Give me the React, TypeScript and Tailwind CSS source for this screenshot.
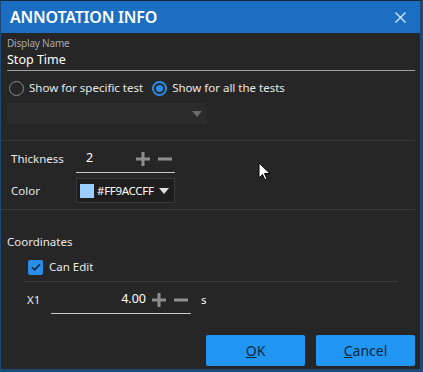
import React, { useState } from "react"

const font = { fontFamily: '"Noto Sans", "Open Sans", sans-serif' }

const Plus = () => (
    <svg width="14" height="14" viewBox="0 0 14 14">
        <path d="M7 0v14M0 7h14" stroke="#8e8e8e" strokeWidth="3" />
    </svg>
)

const Minus = () => (
    <svg width="14" height="14" viewBox="0 0 14 14">
        <path d="M0 7h14" stroke="#8e8e8e" strokeWidth="3" />
    </svg>
)

const Caret = ({ color = "#e0e0e0" }: { color?: string }) => (
    <svg width="10" height="6" viewBox="0 0 10 6">
        <path d="M0 0h10L5 6z" fill={color} />
    </svg>
)

const Divider = ({ className = "" }: { className?: string }) => (
    <div className={"h-px bg-[#3a3a3a] " + className} />
)

const App = () => {
    const [allTests, setAllTests] = useState(true)
    const [canEdit, setCanEdit] = useState(true)

    return (
        <div
            className="relative w-[423px] h-[372px] flex flex-col bg-[#262626] border-t border-t-[#1a2a3a] border-l border-l-[#1a4a78] border-r-[3px] border-r-[#1a4a78] border-b-[3px] border-b-[#1a4a78] text-white select-none"
            style={font}
        >
            {/* Title bar */}
            <div className="h-[32px] shrink-0 bg-[#1b6ec2] flex items-center justify-between pl-[9px] pr-[14px]">
                <span className="text-[16px] font-semibold tracking-[-0.2px] text-white">ANNOTATION INFO</span>
                <svg width="11" height="11" viewBox="0 0 11 11">
                    <path d="M0.5 0.5l10 10M10.5 0.5l-10 10" stroke="#dfefff" strokeWidth="1.2" />
                </svg>
            </div>

            {/* Display name */}
            <div className="pl-[6px] pr-[5px] pt-[4px]">
                <div className="text-[10px] leading-[13px] text-[#a8a8a8] tracking-[-0.2px]">Display Name</div>
                <div className="text-[12.5px] leading-[17px] mt-[1px] pb-[2px] border-b border-[#a0a0a0] text-white">Stop Time</div>
            </div>

            {/* Radios */}
            <div className="flex items-center h-[20px] mt-[7px] pl-[8px] text-[11.5px] text-[#e8e8e8]">
                <button className="flex items-center gap-[5px]" onClick={() => setAllTests(false)}>
                    <span className="w-[15px] h-[15px] rounded-full border border-[#8a8a8a] flex items-center justify-center">
                        {!allTests && <span className="w-[7px] h-[7px] rounded-full bg-[#2a8ee8]" />}
                    </span>
                    Show for specific test
                </button>
                <button className="flex items-center gap-[5px] ml-[9px]" onClick={() => setAllTests(true)}>
                    <span className="w-[15px] h-[15px] rounded-full border-2 border-[#2a8ee8] flex items-center justify-center">
                        {allTests && <span className="w-[7px] h-[7px] rounded-full bg-[#2a8ee8]" />}
                    </span>
                    Show for all the tests
                </button>
            </div>

            {/* Disabled test select */}
            <div className="ml-[6px] mt-[5px] w-[200px] h-[21px] bg-[#2b2b2b] flex items-center justify-end pr-[5px]">
                <Caret color="#6a6a6a" />
            </div>

            <Divider className="mt-[16px] mr-[5px]" />

            {/* Thickness */}
            <div className="flex items-center h-[32px] pl-[10px] pt-[4px] text-[11.5px] text-[#e8e8e8]">
                <span className="w-[65px]">Thickness</span>
                <div className="w-[99px] h-[28px] flex items-center border-b border-[#c8c8c8]">
                    <span className="ml-[10px] text-white text-[12.5px] flex-1">2</span>
                    <div className="flex items-center gap-[8px] mr-[3px]">
                        <Plus />
                        <Minus />
                    </div>
                </div>
            </div>

            {/* Color */}
            <div className="flex items-center mt-[5px] pl-[10px] text-[11.5px] text-[#e8e8e8]">
                <span className="w-[65px]">Color</span>
                <div className="w-[99px] h-[25px] bg-[#1e1e1e] border border-[#3a3a3a] flex items-center pl-[3px] pr-[5px]">
                    <span className="w-[14px] h-[14px] bg-[#9accff]" />
                    <span className="ml-[3px] flex-1 text-[11.5px] tracking-[-0.3px] text-white">#FF9ACCFF</span>
                    <Caret />
                </div>
            </div>

            <Divider className="mt-[6px] mr-[5px]" />

            {/* Coordinates */}
            <div className="mt-[24px] pl-[6px] text-[11.5px] text-[#e8e8e8] leading-[16px]">Coordinates</div>

            <div className="flex items-center mt-[9px] pl-[27px] h-[16px] text-[11.5px] text-[#e8e8e8]">
                <button
                    className="w-[15px] h-[15px] rounded-[2px] bg-[#2a8ee8] flex items-center justify-center"
                    onClick={() => setCanEdit(!canEdit)}
                >
                    {canEdit && (
                        <svg width="12" height="12" viewBox="0 0 12 12">
                            <path d="M2 6.2l2.7 2.7L10 3.2" stroke="#10243a" strokeWidth="1.6" fill="none" />
                        </svg>
                    )}
                </button>
                <span className="ml-[6px]">Can Edit</span>
            </div>

            <Divider className="mt-[6px] ml-[23px] mr-[22px]" />

            {/* X1 */}
            <div className="flex items-center h-[32px] pt-[4px] pl-[26px] text-[11.5px] text-[#e8e8e8]">
                <span className="w-[24px]">X1</span>
                <div className="w-[140px] h-[28px] flex items-center justify-end border-b border-[#c8c8c8] pr-[3px]">
                    <span className="text-[12.5px] text-white mr-[6px]">4.00</span>
                    <div className="flex items-center gap-[8px]">
                        <Plus />
                        <Minus />
                    </div>
                </div>
                <span className="ml-[10px] text-white">s</span>
            </div>

            {/* Buttons */}
            <div className="mt-auto mb-[3px] flex justify-end gap-[11px] pr-[5px]">
                <button className="w-[99px] h-[31px] rounded-[2px] bg-[#2196f3] text-[#0d2740] text-[14px]">
                    <span className="underline">O</span>K
                </button>
                <button className="w-[99px] h-[31px] rounded-[2px] bg-[#2196f3] text-[#0d2740] text-[14px]">
                    <span className="underline">C</span>ancel
                </button>
            </div>

            {/* Mouse cursor */}
            <svg className="absolute left-[257px] top-[161px]" width="13" height="20" viewBox="0 0 13 20">
                <path d="M1 1v15l3.5-3.5 2.5 5.5 2-1-2.5-5.5H12z" fill="#fff" stroke="#000" strokeWidth="1" />
            </svg>
        </div>
    )
}

export default App
